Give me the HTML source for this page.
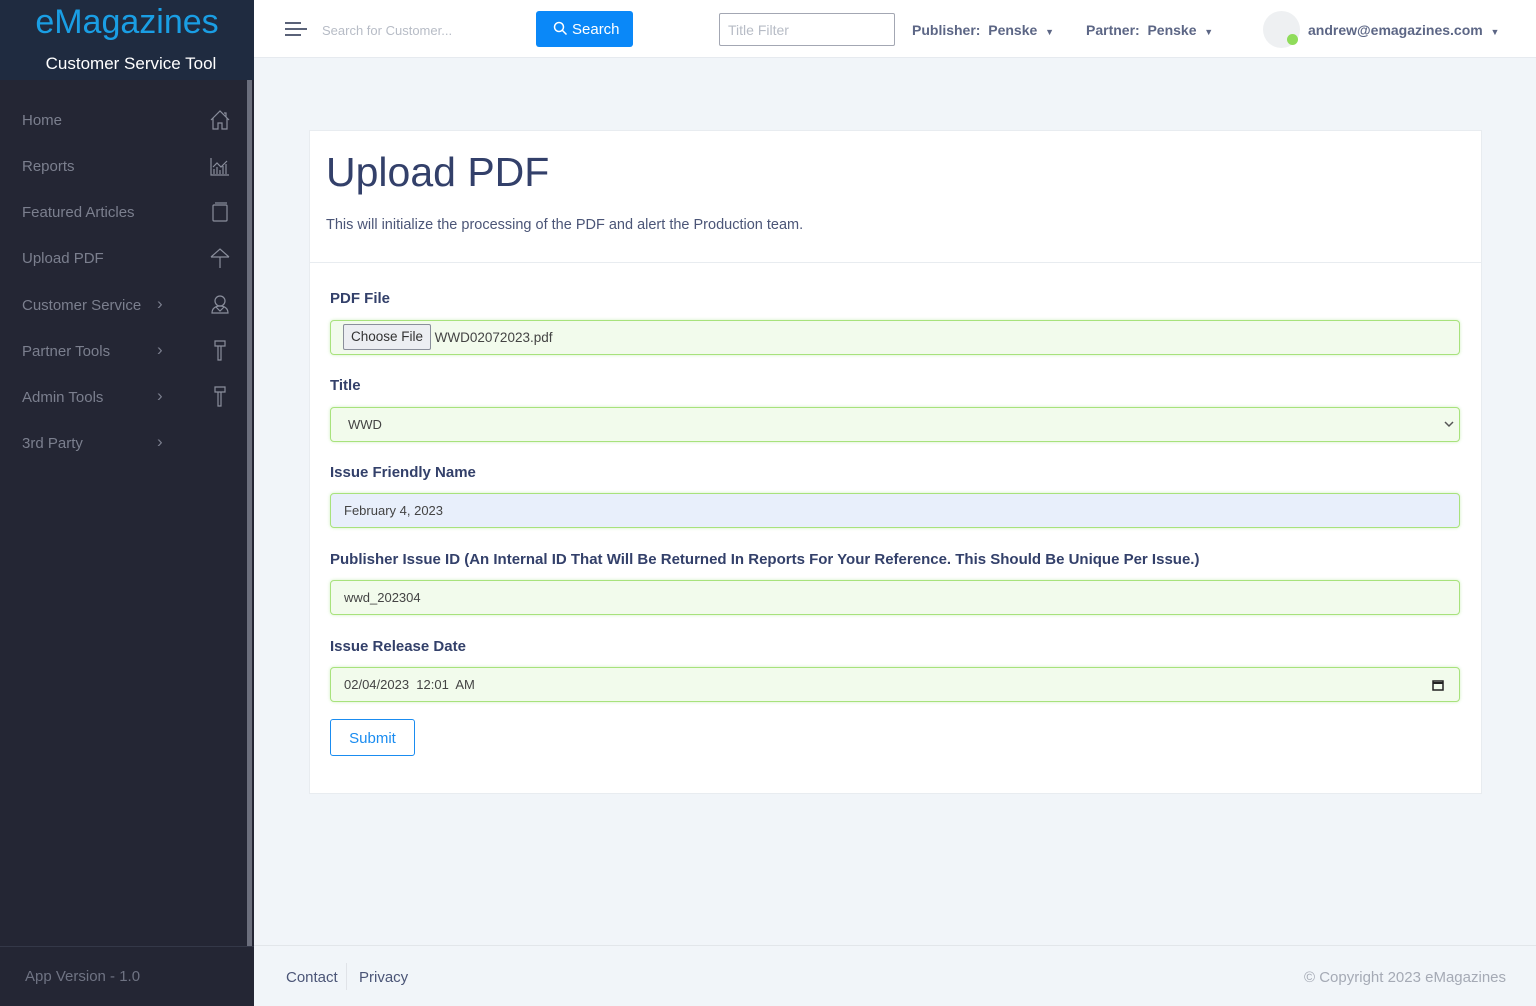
<!DOCTYPE html>
<html><head><meta charset="utf-8"><style>
*{box-sizing:border-box;margin:0;padding:0}
body{width:1536px;height:1006px;overflow:hidden;font-family:"Liberation Sans",sans-serif;background:#f1f5f9;position:relative;color:#3a4466}
.abs{position:absolute}
#side{left:0;top:0;width:254px;height:1006px;background:#242634}
#logo{left:0;top:0;width:254px;height:80px;background:#1f2b40}
.nav{position:absolute;left:22px;font-size:15px;color:#7b7f8e}
.chev{position:absolute;left:157px;color:#7b7f8e;font-size:17px}
.ico{position:absolute;left:209px;width:22px;height:22px}
.lbl{position:absolute;left:330px;font-weight:bold;font-size:15px;color:#33406a}
.inp{position:absolute;left:330px;width:1130px;height:35px;border:1px solid #a8e27c;border-radius:4px;background:#f2fbec;box-shadow:0 0 3px rgba(140,220,100,.4);font-size:13px;color:#444;padding-left:13px;line-height:33px}
</style></head><body>
<div id="side" class="abs"></div>
<div id="logo" class="abs">
<div class="abs" style="left:0;width:254px;top:3px;text-align:center;color:#1a9ee4;font-size:34px;font-weight:500">eMagazines</div>
<div class="abs" style="left:0;width:262px;top:54px;text-align:center;color:#fff;font-size:17px">Customer Service Tool</div>
</div>
<div class="abs" style="left:247px;top:80px;width:5px;height:866px;background:#6b6e7c"></div>
<div class="abs" style="left:0;top:946px;width:254px;height:1px;background:#343848"></div>

<div class="nav" style="top:112px">Home</div>
<div class="nav" style="top:158px">Reports</div>
<div class="nav" style="top:204px">Featured Articles</div>
<div class="nav" style="top:250px">Upload PDF</div>
<div class="nav" style="top:297px">Customer Service</div>
<div class="nav" style="top:343px">Partner Tools</div>
<div class="nav" style="top:389px">Admin Tools</div>
<div class="nav" style="top:435px">3rd Party</div>
<div class="chev" style="top:294px">&#8250;</div>
<div class="chev" style="top:340px">&#8250;</div>
<div class="chev" style="top:386px">&#8250;</div>
<div class="chev" style="top:432px">&#8250;</div>
<svg class="ico" style="top:109px" viewBox="0 0 22 22" fill="none" stroke="#8a8e9c" stroke-width="1.2"><path d="M2 11L11 2l9 9M4 9v11h5v-6h4v6h5V9M15 4h2v4"/></svg>
<svg class="ico" style="top:155px" viewBox="0 0 22 22" fill="none" stroke="#8a8e9c" stroke-width="1.2"><path d="M2 3v17h18M5 19v-5M8 19v-7M11 19v-4M14 19v-8M17 19v-10M4 12l4-4 4 4 6-6"/></svg>
<svg class="ico" style="top:201px" viewBox="0 0 22 22" fill="none" stroke="#8a8e9c" stroke-width="1.2"><rect x="4" y="4" width="14" height="16" rx="1"/><path d="M6 2h12"/></svg>
<svg class="ico" style="top:247px" viewBox="0 0 22 22" fill="none" stroke="#8a8e9c" stroke-width="1.2"><path d="M2 10L11 2l9 8M2 10h18M11 10v11"/></svg>
<svg class="ico" style="top:293px" viewBox="0 0 22 22" fill="none" stroke="#8a8e9c" stroke-width="1.2"><circle cx="11" cy="8" r="5"/><path d="M3 20c0-5 4-7 8-7s8 2 8 7zM7 14l4 4 4-4"/></svg>
<svg class="ico" style="top:339px" viewBox="0 0 22 22" fill="none" stroke="#8a8e9c" stroke-width="1.2"><path d="M6 2h10v5H6zM9 7h3v14H9z"/></svg>
<svg class="ico" style="top:385px" viewBox="0 0 22 22" fill="none" stroke="#8a8e9c" stroke-width="1.2"><path d="M6 2h10v5H6zM9 7h3v14H9z"/></svg>
<div class="abs" style="left:25px;top:968px;font-size:15px;color:#6f7383">App Version - 1.0</div>

<!-- top bar -->
<div class="abs" style="left:254px;top:0;width:1282px;height:58px;background:#fff;border-bottom:1px solid #e6eaef"></div>
<svg class="abs" style="left:285px;top:21px" width="22" height="16" viewBox="0 0 22 16" stroke="#5a6278" stroke-width="2"><path d="M0 2h16M0 8h22M0 14h16"/></svg>
<div class="abs" style="left:322px;top:23px;font-size:13px;color:#b7bcc6">Search for Customer...</div>
<div class="abs" style="left:536px;top:11px;width:97px;height:36px;background:#0a88f8;border-radius:3px;color:#fff;font-size:15px;line-height:38px;padding-left:36px">Search</div>
<svg class="abs" style="left:553px;top:21px" width="15" height="15" viewBox="0 0 15 15" fill="none" stroke="#fff" stroke-width="1.5"><circle cx="6" cy="6" r="4.5"/><path d="M9.5 9.5l4 4"/></svg>
<div class="abs" style="left:719px;top:13px;width:176px;height:33px;border:1px solid #a3a7b3;border-radius:2px;font-size:14px;color:#b7bcc6;padding:8px 8px">Title Filter</div>
<div class="abs" style="left:912px;top:22px;font-size:14px;font-weight:bold;color:#5c6685">Publisher:&nbsp; Penske &nbsp;<span style="font-size:9px">&#9660;</span></div>
<div class="abs" style="left:1086px;top:22px;font-size:14px;font-weight:bold;color:#5c6685">Partner:&nbsp; Penske &nbsp;<span style="font-size:9px">&#9660;</span></div>
<div class="abs" style="left:1263px;top:11px;width:37px;height:37px;border-radius:50%;background:#eef0f2"></div>
<div class="abs" style="left:1287px;top:34px;width:11px;height:11px;border-radius:50%;background:#8fdc5a"></div>
<div class="abs" style="left:1308px;top:22px;font-size:14px;font-weight:bold;color:#5c6685">andrew@emagazines.com &nbsp;<span style="font-size:9px">&#9660;</span></div>

<!-- card -->
<div class="abs" style="left:309px;top:130px;width:1173px;height:664px;background:#fff;border:1px solid #e8ecf0"></div>
<div class="abs" style="left:309px;top:262px;width:1173px;height:1px;background:#e8ecf0"></div>
<div class="abs" style="left:326px;top:149px;font-size:41px;color:#33406a">Upload PDF</div>
<div class="abs" style="left:326px;top:217px;font-size:14.5px;color:#4b5577">This will initialize the processing of the PDF and alert the Production team.</div>

<div class="lbl" style="top:290px">PDF File</div>
<div class="inp" style="top:320px;padding-left:12px"><span style="display:inline-block;border:1px solid #8a8f9b;background:#eceef2;border-radius:2px;height:26px;line-height:24px;padding:0 7px;font-size:13.5px;color:#333;vertical-align:middle;margin-top:-3px">Choose File</span> <span style="font-size:13.5px">WWD02072023.pdf</span></div>
<div class="lbl" style="top:377px">Title</div>
<div class="inp" style="top:407px;padding-left:17px">WWD
<svg style="position:absolute;right:5px;top:13px" width="10" height="7" viewBox="0 0 10 7" fill="none" stroke="#555" stroke-width="1.5"><path d="M1 1l4 4 4-4"/></svg></div>
<div class="lbl" style="top:464px">Issue Friendly Name</div>
<div class="inp" style="top:493px;background:#e8effb">February 4, 2023</div>
<div class="lbl" style="top:551px">Publisher Issue ID (An Internal ID That Will Be Returned In Reports For Your Reference. This Should Be Unique Per Issue.)</div>
<div class="inp" style="top:580px">wwd_202304</div>
<div class="lbl" style="top:638px">Issue Release Date</div>
<div class="inp" style="top:667px">02/04/2023&nbsp; 12:01&nbsp; AM
<svg style="position:absolute;right:15px;top:11px" width="12" height="12" viewBox="0 0 12 12" fill="none" stroke="#222" stroke-width="1.5"><rect x="1" y="2" width="10" height="9"/><path d="M1 4h10" stroke-width="2"/></svg></div>
<div class="abs" style="left:330px;top:719px;width:85px;height:37px;border:1px solid #1a8cf0;border-radius:3px;color:#1a8cf0;font-size:15px;text-align:center;line-height:37px">Submit</div>

<!-- footer -->
<div class="abs" style="left:254px;top:945px;width:1282px;height:1px;background:#e2e6ea"></div>
<div class="abs" style="left:286px;top:969px;font-size:15px;color:#4b5577">Contact</div>
<div class="abs" style="left:346px;top:963px;width:1px;height:27px;background:#e0e3e8"></div>
<div class="abs" style="left:359px;top:969px;font-size:15px;color:#4b5577">Privacy</div>
<div class="abs" style="left:1304px;top:969px;font-size:15px;color:#a5aab5">© Copyright 2023 eMagazines</div>
</body></html>
